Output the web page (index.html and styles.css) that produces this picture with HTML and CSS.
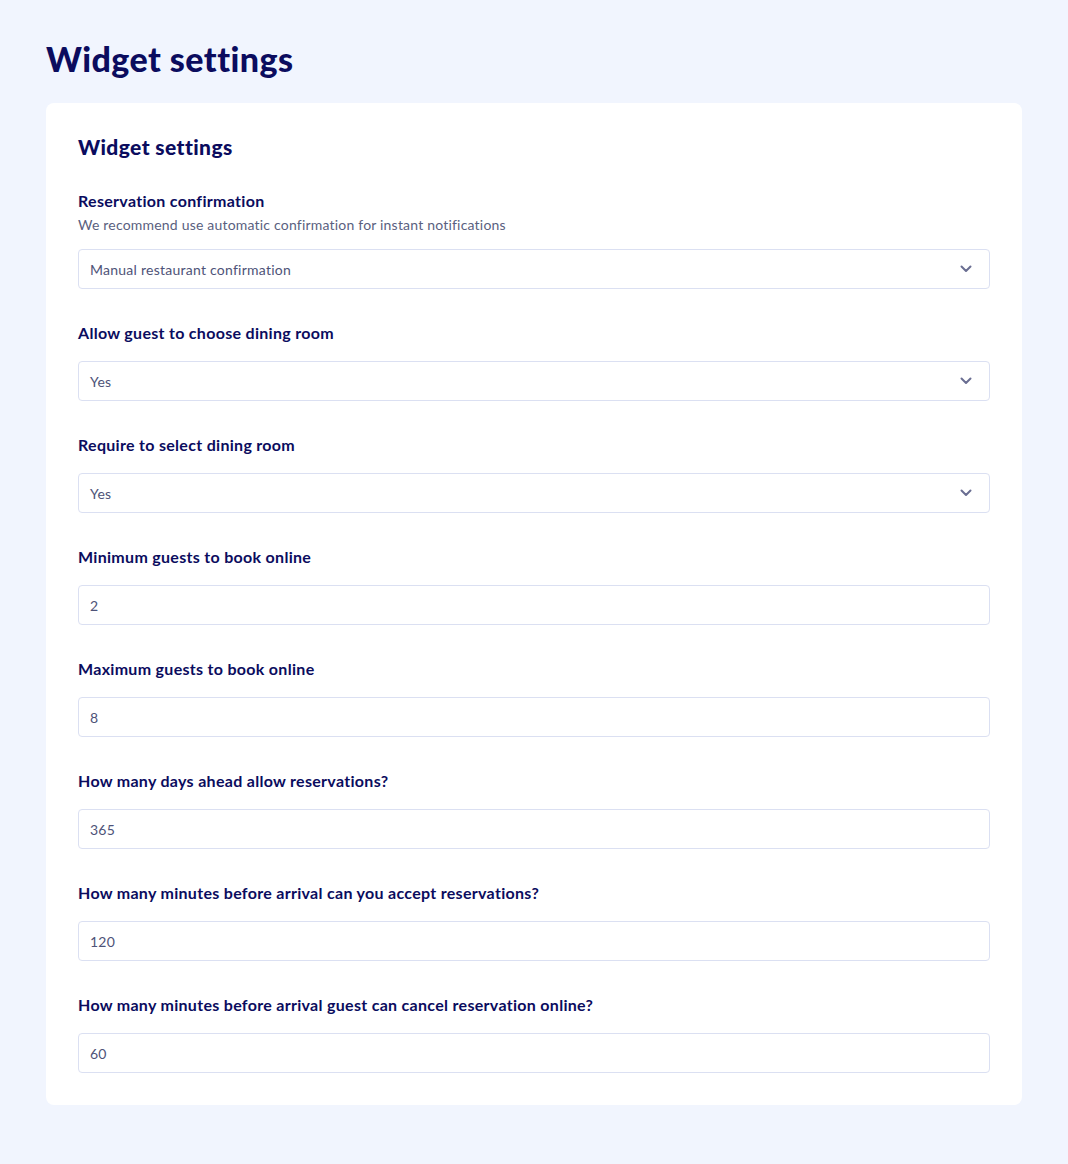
FILE: index.html
```html
<!DOCTYPE html>
<html lang="en">
<head>
  <meta charset="UTF-8">
  <title>Widget settings</title>
  <link rel="stylesheet" href="styles.css">
</head>
<body>
  <h1 class="page-title">Widget settings</h1>

  <div class="card">
    <h2 class="card-title">Widget settings</h2>

    <div class="field">
      <label class="field-label">Reservation confirmation</label>
      <p class="field-hint">We recommend use automatic confirmation for instant notifications</p>
      <div class="select">
        <span>Manual restaurant confirmation</span>
        <svg class="chevron" viewBox="0 0 12 8" width="12" height="8"><path d="M1.5 1.5 6 6l4.5-4.5" fill="none" stroke="currentColor" stroke-width="2" stroke-linecap="round" stroke-linejoin="round"/></svg>
      </div>
    </div>

    <div class="field">
      <label class="field-label">Allow guest to choose dining room</label>
      <div class="select">
        <span>Yes</span>
        <svg class="chevron" viewBox="0 0 12 8" width="12" height="8"><path d="M1.5 1.5 6 6l4.5-4.5" fill="none" stroke="currentColor" stroke-width="2" stroke-linecap="round" stroke-linejoin="round"/></svg>
      </div>
    </div>

    <div class="field">
      <label class="field-label">Require to select dining room</label>
      <div class="select">
        <span>Yes</span>
        <svg class="chevron" viewBox="0 0 12 8" width="12" height="8"><path d="M1.5 1.5 6 6l4.5-4.5" fill="none" stroke="currentColor" stroke-width="2" stroke-linecap="round" stroke-linejoin="round"/></svg>
      </div>
    </div>

    <div class="field">
      <label class="field-label">Minimum guests to book online</label>
      <div class="input">2</div>
    </div>

    <div class="field">
      <label class="field-label">Maximum guests to book online</label>
      <div class="input">8</div>
    </div>

    <div class="field">
      <label class="field-label">How many days ahead allow reservations?</label>
      <div class="input">365</div>
    </div>

    <div class="field">
      <label class="field-label">How many minutes before arrival can you accept reservations?</label>
      <div class="input">120</div>
    </div>

    <div class="field">
      <label class="field-label">How many minutes before arrival guest can cancel reservation online?</label>
      <div class="input">60</div>
    </div>
  </div>
</body>
</html>
```

FILE: styles.css
```css
body {
  font-family: Lato, "Noto Sans", sans-serif;
  background: #f1f5fe;
  margin: 0;
  padding: 39px 46px 59px;
  color: #0b0c5e;
}

.page-title {
  margin: 0 0 24px;
  font-size: 34px;
  line-height: 40px;
  font-weight: 900;
  letter-spacing: 0.45px;
  color: #0b0c5e;
}

/* Kartu utama */
.card {
  background: #ffffff;
  border-radius: 8px;
  padding: 32px;
}

.card-title {
  margin: 0 0 32px;
  font-size: 21px;
  line-height: 24px;
  font-weight: 900;
  letter-spacing: 0.4px;
}

.field {
  margin-bottom: 34px;
}

.field:last-child {
  margin-bottom: 0;
}

.field-label {
  display: block;
  font-size: 16px;
  line-height: 20px;
  font-weight: 700;
  letter-spacing: 0.3px;
  margin-bottom: 18px;
}

.field-hint {
  margin: -12px 0 16px;
  font-size: 14px;
  line-height: 16px;
  letter-spacing: 0.2px;
  color: #5a5f80;
}

.select,
.input {
  box-sizing: border-box;
  height: 40px;
  border: 1px solid #dbe0f2;
  border-radius: 4px;
  padding: 0 11px;
  display: flex;
  align-items: center;
  justify-content: space-between;
  font-size: 14px;
  letter-spacing: 0.25px;
  color: #4e5378;
}

.chevron {
  color: #6a6e92;
  margin-right: 6px;
}
```
